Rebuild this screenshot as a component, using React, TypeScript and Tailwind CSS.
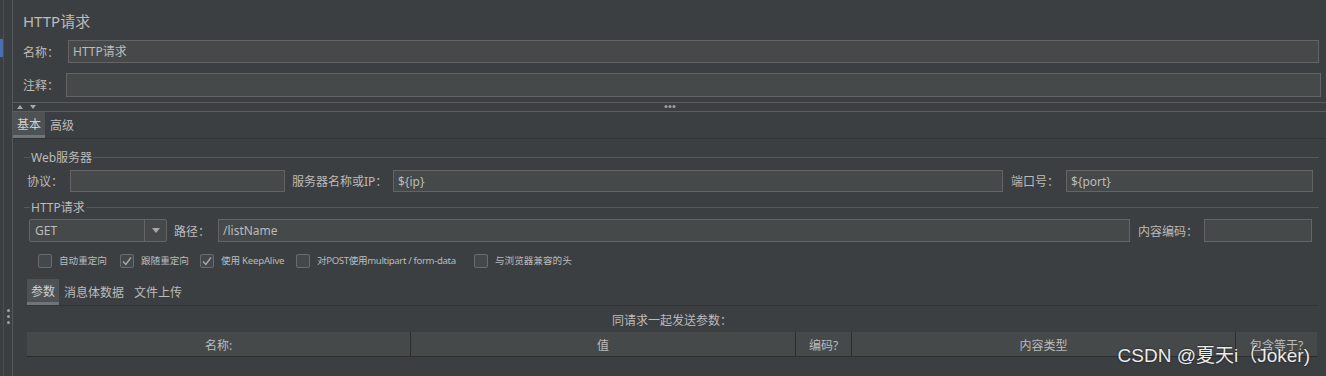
import React from 'react';

const LINE = 'bg-[#55595b]';

const Field = ({ value, className }: { value?: string; className: string }) => (
  <div className={`flex h-full items-center border border-[#646464] bg-[#45494a] px-[4px] pt-[1px] text-[12px] text-[#bbbbbb] ${className}`}>
    {value}
  </div>
);

const Legend = ({ title, className }: { title: string; className: string }) => (
  <div className={`flex h-[14px] items-center pl-[11px] pr-[7px] ${className}`}>
    <div className={`h-px w-[6px] ${LINE}`} />
    <span className="px-[1px] pt-[1px] text-[12px] leading-[14px]">{title}</span>
    <div className={`h-px flex-1 ${LINE}`} />
  </div>
);

const CheckBox = ({ label, checked, className, textClass }: { label: string; checked?: boolean; className: string; textClass?: string }) => (
  <div className={`flex shrink-0 items-center gap-[7px] ${className}`}>
    <span className="flex h-[14px] w-[14px] shrink-0 items-center justify-center rounded-[2px] border border-[#6b6b6b] bg-[#43494a]">
      {checked && (
        <svg width="12" height="12" viewBox="0 0 12 12" fill="none">
          <path d="M2 6.5 L4.8 9.5 L10 2.5" stroke="#a9a9a9" strokeWidth="1.4" />
        </svg>
      )}
    </span>
    <span className={`whitespace-nowrap text-[9.6px] leading-[14px] ${textClass ?? ''}`}>{label}</span>
  </div>
);

const COLUMNS = ['名称:', '值', '编码?', '内容类型', '包含等于?'];

export default function App() {
  return (
    <div className="relative flex h-[376px] w-[1326px] overflow-hidden bg-[#3c3f41] font-['Noto_Sans','Noto_Sans_CJK_SC',sans-serif] text-[#bbbbbb]">
      {/* left splitter strip */}
      <div className="flex w-[13px] shrink-0">
        <div className="w-[3px]">
          <div className="mt-[39px] h-[18px] bg-[#4b6eaf]" />
        </div>
        <div className="w-px bg-[#4a4d4f]" />
        <div className="flex flex-1 flex-col items-center gap-[3px] pt-[309px]">
          <span className="h-[3px] w-[3px] rounded-full bg-[#a0a0a0]" />
          <span className="h-[3px] w-[3px] rounded-full bg-[#a0a0a0]" />
          <span className="h-[3px] w-[3px] rounded-full bg-[#a0a0a0]" />
        </div>
        <div className="w-px bg-[#55595b]" />
      </div>

      <div className="flex min-w-0 flex-1 flex-col">
        {/* title */}
        <div className="h-[40px] pl-[10px] pt-[12px] text-[15px] leading-[18px]">HTTP请求</div>

        <div className="flex h-[23px] items-center pl-[10px] pr-[7px]">
          <span className="w-[45px] pt-[2px] text-[12px]">名称：</span>
          <Field value="HTTP请求" className="flex-1" />
        </div>

        <div className="mt-[10px] flex h-[24px] items-center pl-[10px] pr-[5px]">
          <span className="w-[43px] pt-[2px] text-[12px]">注释：</span>
          <Field className="flex-1" />
        </div>

        {/* split bar */}
        <div className="h-[5px]" />
        <div className="relative flex h-[10px] items-center border-y border-[#5b5e60]">
          <svg className="ml-[4px]" width="6" height="4" viewBox="0 0 6 4">
            <path d="M0 4 L3 0 L6 4 Z" fill="#a8a8a8" />
          </svg>
          <svg className="ml-[7px]" width="6" height="4" viewBox="0 0 6 4">
            <path d="M0 0 L6 0 L3 4 Z" fill="#a8a8a8" />
          </svg>
          <div className="absolute left-1/2 top-[2px] flex -translate-x-1/2 gap-[1px]">
            <span className="h-[3px] w-[3px] rounded-full bg-[#a0a0a0]" />
            <span className="h-[3px] w-[3px] rounded-full bg-[#a0a0a0]" />
            <span className="h-[3px] w-[3px] rounded-full bg-[#a0a0a0]" />
          </div>
        </div>

        {/* main tabs */}
        <div className="flex h-[27px] border-b border-[#313335] text-[12px]">
          <div className="flex items-center border-b-[3px] border-[#70757a] bg-[#4e5254] px-[4px] pt-[3px] text-[#d0d0d0]">基本</div>
          <div className="flex items-center px-[5px] pt-[1px]">高级</div>
        </div>

        <Legend title="Web服务器" className="mt-[11px]" />

        <div className="mt-[6px] flex h-[22px] items-center pl-[14px] pr-[13px] text-[12px]">
          <span className="w-[43px] shrink-0 pt-[2px]">协议：</span>
          <Field className="w-[215px] shrink-0" />
          <span className="ml-[7px] w-[101px] shrink-0 pt-[2px]">服务器名称或IP：</span>
          <Field value="${ip}" className="flex-1" />
          <span className="ml-[8px] w-[55px] shrink-0 pt-[2px]">端口号：</span>
          <Field value="${port}" className="w-[247px] shrink-0" />
        </div>

        <Legend title="HTTP请求" className="mt-[8px]" />

        <div className="mt-[5px] flex h-[23px] items-center pl-[16px] pr-[14px] text-[12px]">
          <div className="flex h-full w-[138px] shrink-0 rounded-[2px] border border-[#646464] bg-[#45494a]">
            <span className="flex flex-1 items-center pl-[5px] pt-[1px]">GET</span>
            <span className="flex w-[22px] items-center justify-center border-l border-[#646464]">
              <svg width="8" height="5" viewBox="0 0 8 5">
                <path d="M0 0 L8 0 L4 5 Z" fill="#a8a8a8" />
              </svg>
            </span>
          </div>
          <span className="ml-[7px] w-[44px] shrink-0 pt-[2px]">路径：</span>
          <Field value="/listName" className="flex-1" />
          <span className="ml-[8px] w-[66px] shrink-0 pt-[2px]">内容编码：</span>
          <Field className="w-[108px] shrink-0" />
        </div>

        <div className="mt-[12px] flex h-[14px] items-center pl-[25px]">
          <CheckBox label="自动重定向" className="w-[82px]" />
          <CheckBox label="跟随重定向" checked className="w-[80px]" />
          <CheckBox label="使用 KeepAlive" checked className="w-[96px]" textClass="tracking-[-0.2px]" />
          <CheckBox label="对POST使用multipart / form-data" className="w-[178px]" textClass="tracking-[-0.35px]" />
          <CheckBox label="与浏览器兼容的头" className="w-[120px]" />
        </div>

        {/* sub tabs */}
        <div className="mt-[11px] pl-[14px] pr-[8px]">
          <div className="flex h-[27px] border-b border-[#313335] text-[12px]">
            <div className="flex items-center border-b-[3px] border-[#70757a] bg-[#4e5254] px-[4px] pt-[3px] text-[#d0d0d0]">参数</div>
            <div className="flex items-center px-[5px] pt-[1px]">消息体数据</div>
            <div className="flex items-center px-[5px] pt-[1px]">文件上传</div>
          </div>
        </div>

        <div className="flex h-[26px] items-center justify-center pl-[14px] pr-[9px] pt-[4px] text-[12px]">
          同请求一起发送参数：
        </div>

        <div className="pl-[14px] pr-[9px]">
          <div className="grid h-[25px] grid-cols-[384px_385px_56px_384px_1fr] border-b border-[#2b2d2f] bg-[#45494a] text-[12px]">
            {COLUMNS.map((c, i) => (
              <div
                key={c}
                className={`flex items-center justify-center overflow-visible whitespace-nowrap pt-[3px] ${i < COLUMNS.length - 1 ? 'border-r border-[#2b2d2f]' : ''}`}
              >
                {c}
              </div>
            ))}
          </div>
        </div>
      </div>

      {/* watermark */}
      <div className="absolute bottom-[9px] right-[16px] whitespace-nowrap font-['Liberation_Sans','Noto_Sans_CJK_SC',sans-serif] text-[19px] leading-[22px] text-[#ececec] [text-shadow:0_0_2px_rgba(0,0,0,0.8)]">
        CSDN @夏天i（Joker)
      </div>
    </div>
  );
}
